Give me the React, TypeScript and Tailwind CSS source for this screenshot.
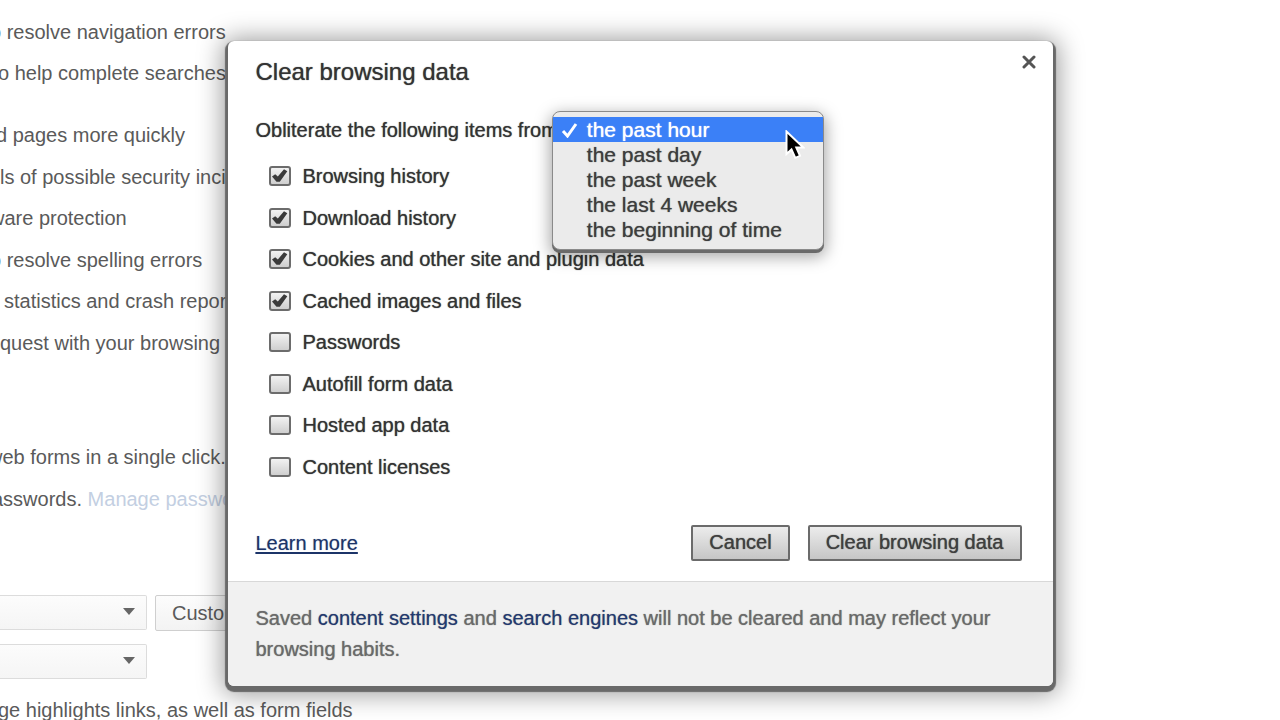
import { useState } from "react";

// ─────────────────────────────────────────────
// Settings page with the "Clear browsing data" dialog on top
// ─────────────────────────────────────────────

const serviceLines = [
  { text: "o resolve navigation errors", indent: "-ml-2.5" },
  { text: "o help complete searches", indent: "-ml-0.5" },
];

const privacyLines = [
  { text: "d pages more quickly", indent: "-ml-1" },
  { text: "ls of possible security incidents", indent: "ml-0" },
  { text: "ware protection", indent: "-ml-2.5" },
  { text: "o resolve spelling errors", indent: "-ml-2.5" },
  { text: "statistics and crash reports", indent: "ml-1" },
  { text: "quest with your browsing traffic", indent: "ml-0" },
];

const dataTypes = [
  { id: "history", label: "Browsing history", checked: true },
  { id: "downloads", label: "Download history", checked: true },
  { id: "cookies", label: "Cookies and other site and plugin data", checked: true },
  { id: "cache", label: "Cached images and files", checked: true },
  { id: "passwords", label: "Passwords", checked: false },
  { id: "autofill", label: "Autofill form data", checked: false },
  { id: "apps", label: "Hosted app data", checked: false },
  { id: "licenses", label: "Content licenses", checked: false },
];

const periods = [
  "the past hour",
  "the past day",
  "the past week",
  "the last 4 weeks",
  "the beginning of time",
];

function FontSelect({ label }: { label: string }) {
  return (
    <div className="relative w-[147px]">
      <select
        aria-label={label}
        className="block h-[35px] w-full appearance-none rounded-r-xs border border-l-0 border-[#dcdcdc] bg-linear-to-b from-[#fcfcfc] to-[#f5f5f5]"
      />
      <svg
        viewBox="0 0 12 7"
        className="pointer-events-none absolute top-[13px] right-3 h-[7px] w-3 fill-[#666]"
      >
        <path d="M0 0h12L6 7z" />
      </svg>
    </div>
  );
}

function SettingsPage() {
  return (
    <main className="flex flex-col text-xl leading-6 whitespace-nowrap text-[#5a5a5a]">
      <div className="flex flex-col gap-[17px] pt-5">
        {serviceLines.map((line) => (
          <p key={line.text} className={line.indent}>
            {line.text}
          </p>
        ))}
      </div>

      <div className="mt-[38px] flex min-h-[232px] flex-col justify-between">
        {privacyLines.map((line) => (
          <p key={line.text} className={line.indent}>
            {line.text}
          </p>
        ))}
      </div>

      <div className="mt-[90px] flex flex-col gap-[18px]">
        <p className="-ml-3">web forms in a single click.</p>
        <p className="-ml-2">
          asswords.{" "}
          <a href="#passwords" className="text-[#c3cfe2]">
            Manage passwords
          </a>
        </p>
      </div>

      <div className="mt-[84px] flex flex-col gap-[14px]">
        <div className="flex h-[35px] gap-2">
          <FontSelect label="Font size" />
          <button
            type="button"
            className="h-9 rounded-xs border border-[#cfcfcf] bg-linear-to-b from-[#fcfcfc] to-[#f3f3f3] px-4"
          >
            Customize
          </button>
        </div>
        <FontSelect label="Page zoom" />
      </div>

      <p className="mt-[19px] -ml-0.5">ge highlights links, as well as form fields</p>
    </main>
  );
}

function PeriodMenu({
  value,
  onChange,
}: {
  value: string;
  onChange: (value: string) => void;
}) {
  return (
    <div className="absolute -top-[3px] left-0 z-10 w-[272px] rounded-lg border border-[#8a8a8a] bg-[#ebebeb] pt-[5px] pb-[7px] shadow-[0_3px_0_0_#6a6a6a,0_5px_16px_2px_rgba(0,0,0,0.35)]">
      <ul role="listbox" aria-label="Time period">
        {periods.map((period) => {
          const selected = period === value;
          return (
            <li key={period} role="presentation">
              <button
                type="button"
                role="option"
                aria-selected={selected}
                onClick={() => onChange(period)}
                className={`flex w-full items-center gap-2 pl-2 text-left text-[21px] leading-[25px] ${
                  selected
                    ? "bg-[#3b80f7] text-white text-shadow-[0_0_1px_#fff]"
                    : "text-[#3d3d3d] text-shadow-[0_0_1px_#555]"
                }`}
              >
                <svg viewBox="0 0 18 16" className="h-4 w-[18px] shrink-0">
                  {selected && (
                    <path
                      d="M2 9l4.500 5L15 2"
                      fill="none"
                      stroke="#fff"
                      strokeWidth="3"
                    />
                  )}
                </svg>
                {period}
              </button>
            </li>
          );
        })}
      </ul>

      {/* Mouse pointer resting on the highlighted row */}
      <svg
        viewBox="0 0 20 30"
        className="pointer-events-none absolute top-[18px] left-[232px] h-[30px] w-5"
      >
        <path
          d="M1.500 1.500v22.500l5-4.500 3.800 8.300 4.700-2-3.700-8.300h7z"
          fill="#000"
          stroke="#fff"
          strokeWidth="2"
        />
      </svg>
    </div>
  );
}

function DataCheckbox({
  id,
  label,
  defaultChecked,
}: {
  id: string;
  label: string;
  defaultChecked: boolean;
}) {
  return (
    <div className="flex h-6 items-center gap-3">
      <span className="relative h-5 w-[22px]">
        <input
          id={id}
          type="checkbox"
          defaultChecked={defaultChecked}
          className="peer block h-5 w-full appearance-none rounded-[3px] border-2 border-[#6c6c6c] bg-linear-to-b from-[#f2f2f2] to-[#cfcfcf]"
        />
        <svg
          viewBox="0 0 22 20"
          className="pointer-events-none absolute inset-0 hidden h-5 w-[22px] peer-checked:block"
        >
          <path
            d="M3 10.500l3.200-2.300 2.600 2.300L15 3.200l3.300 2L10.800 15.800H7.500z"
            fill="#3a3a3a"
          />
        </svg>
      </span>
      <label htmlFor={id}>{label}</label>
    </div>
  );
}

const buttonClass =
  "h-9 rounded-xs border-2 border-[#6b6b6b] bg-linear-to-b from-[#ececec] to-[#c6c6c6] px-4 pb-0.5 text-[#3f3f3f] text-shadow-[0_0_1px_#444]";

function ClearDataDialog() {
  const [period, setPeriod] = useState(periods[0]);

  return (
    <section
      role="dialog"
      aria-labelledby="dialog-title"
      className="relative w-full max-w-[825px] rounded-md bg-white text-xl leading-6 text-[#333] shadow-[0_3px_1px_3px_#696969,0_3px_26px_5px_rgba(0,0,0,0.4)] text-shadow-[0_0_1px_#555]"
    >
      <button
        type="button"
        aria-label="Close"
        className="absolute top-[14px] right-[17px] p-0"
      >
        <svg viewBox="0 0 14 14" className="block h-[14px] w-[14px]">
          <path
            d="M2 2l10 10M12 2L2 12"
            fill="none"
            stroke="#555"
            strokeWidth="3"
            strokeLinecap="round"
          />
        </svg>
      </button>

      <div className="px-7 pt-[15px] pb-5">
        <h1 id="dialog-title" className="text-2xl leading-8">
          Clear browsing data
        </h1>

        <div className="mt-[26px] flex h-8 items-center whitespace-nowrap">
          <label htmlFor="period">Obliterate the following items from</label>
          <div className="relative -ml-1.5 h-8 w-[272px]">
            <select
              id="period"
              value={period}
              onChange={(e) => setPeriod(e.target.value)}
              className="h-8 w-full appearance-none opacity-0"
            >
              {periods.map((item) => (
                <option key={item}>{item}</option>
              ))}
            </select>
            <PeriodMenu value={period} onChange={setPeriod} />
          </div>
        </div>

        <div className="mt-[18px] flex min-h-[315px] flex-col justify-between pl-[13px]">
          {dataTypes.map((item) => (
            <DataCheckbox
              key={item.id}
              id={item.id}
              label={item.label}
              defaultChecked={item.checked}
            />
          ))}
        </div>

        <div className="mt-[46px] flex items-center justify-between pr-[3px]">
          <a
            href="#learn-more"
            className="text-[#1c3468] underline underline-offset-2 text-shadow-[0_0_1px_#8fa0c4]"
          >
            Learn more
          </a>
          <div className="flex gap-[18px]">
            <button type="button" className={buttonClass}>
              Cancel
            </button>
            <button type="button" className={buttonClass}>
              Clear browsing data
            </button>
          </div>
        </div>
      </div>

      <footer className="rounded-b-md border-t border-[#d8d8d8] bg-[#f1f1f1] px-7 py-[21px] leading-[31px] text-[#6a6a6a] text-shadow-[0_0_1px_#777]">
        Saved{" "}
        <a href="#content" className="text-[#1f3972]">
          content settings
        </a>{" "}
        and{" "}
        <a href="#search" className="text-[#1f3972]">
          search engines
        </a>{" "}
        will not be cleared and may reflect your browsing habits.
      </footer>
    </section>
  );
}

export default function App() {
  return (
    <div className="relative h-screen overflow-hidden bg-white font-['Liberation_Sans',Arial,sans-serif]">
      <SettingsPage />
      <div className="absolute inset-0 flex items-start justify-center pt-[41px]">
        <ClearDataDialog />
      </div>
    </div>
  );
}
